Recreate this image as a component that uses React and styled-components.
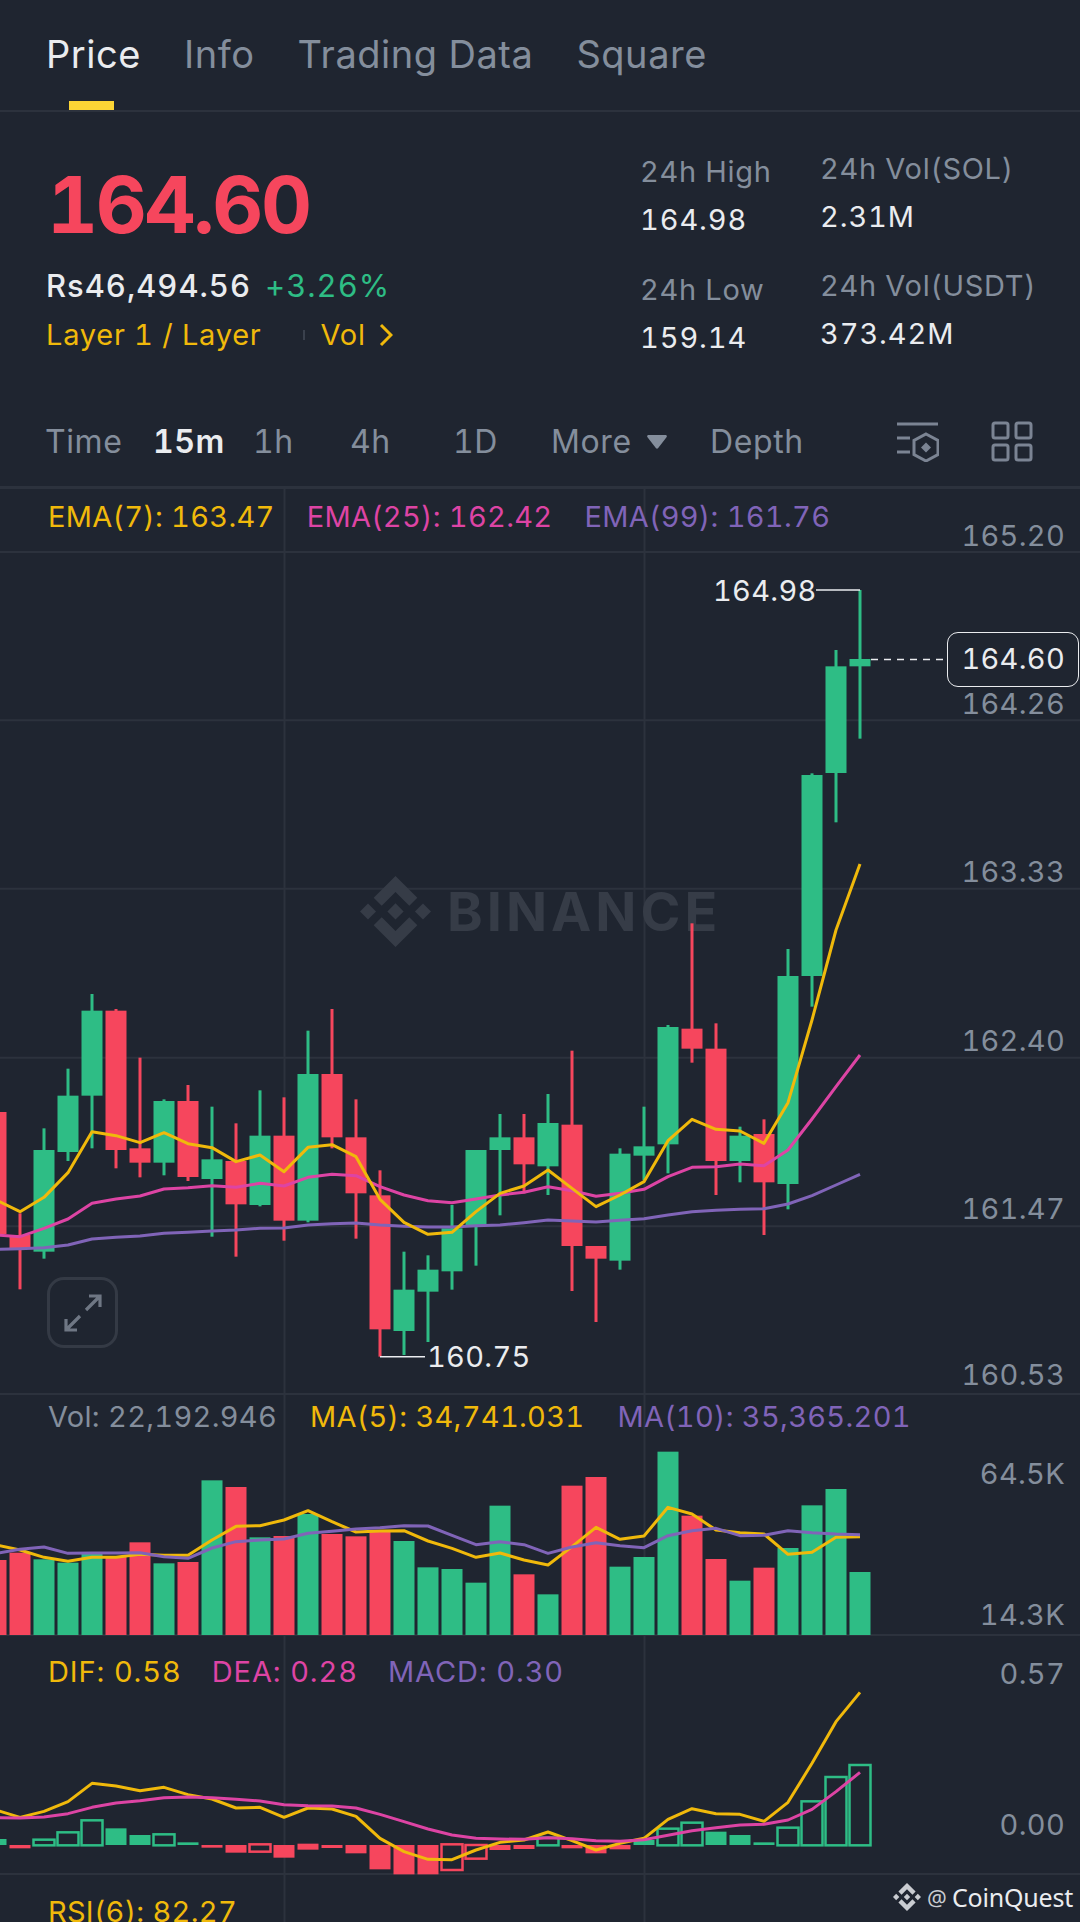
import React from "react";
import styled, { createGlobalStyle } from "styled-components";

const colors = {
  bg: "#1f2530",
  line: "#2c323d",
  muted: "#848e9c",
  white: "#eaecef",
  up: "#2ebd85",
  down: "#f6465d",
  yellow: "#f0b90b",
  pink: "#dd44a4",
  purple: "#8064b8",
};

// candles: up?, wick top, body top, body bottom, wick bottom (3x chart units, see candleY)
const candles = [
  [0, 396, 396, 762, 762], [0, 700, 765, 805, 928], [1, 445, 510, 815, 836], [1, 266, 347, 516, 543],
  [1, 42, 92, 347, 505], [0, 87, 92, 510, 565], [0, 233, 505, 548, 592], [1, 358, 363, 548, 586],
  [0, 315, 363, 591, 603], [1, 380, 538, 597, 770], [0, 430, 543, 673, 830], [1, 331, 467, 675, 679],
  [0, 352, 467, 722, 782], [1, 152, 282, 722, 727], [0, 87, 282, 472, 505], [0, 358, 472, 640, 776],
  [0, 571, 646, 1048, 1130], [1, 815, 929, 1053, 1125], [1, 826, 869, 935, 1086], [1, 675, 745, 874, 929],
  [1, 510, 510, 735, 857], [1, 402, 472, 510, 706], [0, 402, 472, 553, 640], [1, 342, 429, 559, 645],
  [0, 212, 434, 798, 933], [0, 798, 798, 836, 1026], [1, 505, 521, 842, 869], [1, 380, 499, 527, 600],
  [1, 135, 141, 493, 580], [0, -170, 146, 206, 248], [0, 130, 206, 543, 645], [1, 440, 467, 543, 607],
  [0, 418, 462, 607, 765], [1, -93, -12, 612, 688], [1, -620, -615, -12, 80], [1, -990, -941, -621, -473],
  [1, -1170, -963, -941, -724],
];
const ema7 = [660, 695, 652, 578, 455, 467, 488, 458, 491, 503, 545, 525, 575, 502, 494, 530, 658, 727, 763, 757, 695, 640, 618, 570, 625, 680, 645, 605, 482, 418, 448, 453, 490, 368, 120, -150, -348];
const ema25 = [765, 770, 745, 717, 670, 657, 648, 627, 623, 617, 622, 610, 618, 592, 583, 587, 620, 645, 662, 668, 657, 645, 637, 620, 632, 649, 640, 628, 590, 562, 560, 552, 557, 510, 417, 320, 225];
const ema99 = [808, 806, 803, 795, 777, 772, 768, 760, 757, 753, 750, 745, 744, 735, 731, 729, 735, 739, 741, 741, 737, 735, 728, 720, 723, 726, 721, 716, 705, 695, 691, 688, 686, 672, 647, 615, 583];

const volumes = [480, 458, 478, 488, 462, 470, 427, 490, 486, 241, 261, 412, 408, 342, 402, 409, 390, 423, 502, 507, 548, 317, 523, 583, 257, 231, 500, 471, 155, 347, 477, 542, 503, 444, 316, 267, 516];
const ma5 = [435, 450, 472, 484, 472, 472, 463, 466, 466, 420, 379, 377, 360, 332, 365, 396, 393, 392, 423, 445, 472, 459, 480, 495, 440, 382, 418, 408, 322, 342, 390, 398, 402, 463, 457, 412, 410];
const ma10 = [460, 448, 441, 460, 459, 459, 458, 470, 475, 444, 425, 420, 417, 400, 394, 387, 383, 377, 378, 406, 434, 425, 434, 460, 441, 428, 437, 443, 407, 392, 385, 407, 406, 392, 398, 402, 404];

// macd bars: up?, top, bottom, hollow?
const macdBars = [
  [1, 1317, 1335], [0, 1335, 1345], [1, 1319, 1336, 1], [1, 1297, 1336, 1], [1, 1261, 1336, 1], [1, 1285, 1335],
  [1, 1305, 1335], [1, 1303, 1336, 1], [1, 1327, 1335], [0, 1335, 1343], [0, 1335, 1358], [0, 1333, 1355, 1],
  [0, 1335, 1373], [0, 1331, 1349], [0, 1335, 1344], [0, 1335, 1360], [0, 1335, 1408], [0, 1335, 1423],
  [0, 1335, 1423], [0, 1333, 1410, 1], [0, 1335, 1376, 1], [0, 1335, 1350], [0, 1335, 1347], [1, 1313, 1336, 1],
  [0, 1335, 1345], [0, 1335, 1360], [0, 1335, 1348], [1, 1320, 1335], [1, 1286, 1336, 1], [1, 1268, 1336, 1],
  [1, 1295, 1335], [1, 1305, 1335], [1, 1327, 1335], [1, 1283, 1336, 1], [1, 1204, 1336, 1], [1, 1131, 1336, 1],
  [1, 1095, 1336, 1],
];
const dif = [1230, 1252, 1234, 1205, 1150, 1158, 1172, 1162, 1184, 1197, 1224, 1222, 1252, 1224, 1227, 1249, 1315, 1355, 1378, 1379, 1350, 1327, 1320, 1296, 1322, 1350, 1330, 1315, 1258, 1226, 1241, 1243, 1264, 1207, 1090, 965, 877];
const dea = [1253, 1254, 1251, 1241, 1222, 1209, 1202, 1193, 1191, 1193, 1198, 1203, 1214, 1217, 1218, 1224, 1243, 1265, 1287, 1305, 1315, 1317, 1318, 1313, 1316, 1322, 1324, 1319, 1306, 1292, 1283, 1275, 1273, 1260, 1228, 1175, 1117];

const candleX = (i) => -4 + 24 * i;
const candleY = (v) => 980 + v / 3;
const lowerY = (v) => 1400 + v / 3;
const points = (values, toY) => values.map((v, i) => `${candleX(i)},${toY(v)}`).join(" ");

const GlobalStyle = createGlobalStyle`
  html, body {
    margin: 0;
    background: ${colors.bg};
  }
  body {
    font-family: "Inter", "Liberation Sans", sans-serif;
    font-variant-numeric: tabular-nums;
    color: ${colors.white};
  }
`;

const Page = styled.div`
  width: 1080px;
  height: 1922px;
  overflow: hidden;
  background: ${colors.bg};
`;

const Tabs = styled.nav`
  display: flex;
  gap: 43px;
  height: 110px;
  padding-left: 46px;
  border-bottom: 2px solid ${colors.line};
`;

const Tab = styled.div`
  position: relative;
  padding-top: 30px;
  font-size: 38px;
  line-height: 48px;
  letter-spacing: 0.55px;
  color: ${({ $active }) => ($active ? colors.white : colors.muted)};

  ${({ $active }) =>
    $active &&
    `&::after {
      content: "";
      position: absolute;
      left: 23px;
      bottom: 0;
      width: 45px;
      height: 9px;
      background: #fcd535;
    }`}
`;

const Summary = styled.section`
  display: flex;
  height: 283px;
  padding-left: 46px;
`;

const PriceBlock = styled.div`
  width: 594px;
  padding-top: 52px;
`;

const LastPrice = styled.div`
  margin-left: 1px;
  font-size: 79px;
  line-height: 80px;
  font-weight: 700;
  letter-spacing: -2.3px;
  color: ${colors.down};
`;

const FiatRow = styled.div`
  display: flex;
  gap: 14px;
  margin-top: 22px;
  font-size: 31px;
  line-height: 40px;
  font-weight: 500;
  letter-spacing: 1px;
`;

const Change = styled.span`
  font-weight: 400;
  color: ${colors.up};
`;

const TagRow = styled.div`
  display: flex;
  align-items: center;
  margin-top: 9px;
  font-size: 29px;
  line-height: 40px;
  letter-spacing: 0.75px;
  color: ${colors.yellow};
`;

const TagTick = styled.i`
  width: 2px;
  height: 10px;
  margin: 0 16px 0 41px;
  background: #3a414d;
`;

const Chevron = styled.svg`
  width: 14px;
  height: 24px;
  margin-left: 13px;
`;

const StatColumn = styled.div`
  display: flex;
  flex-direction: column;
  gap: ${({ $gap }) => $gap}px;
  width: ${({ $width }) => $width}px;
  padding-top: ${({ $top }) => $top}px;
`;

const StatLabel = styled.div`
  font-size: 29px;
  line-height: 40px;
  letter-spacing: 0.7px;
  color: ${colors.muted};
  white-space: nowrap;
`;

const StatValue = styled.div`
  margin-top: 8px;
  font-size: 29px;
  line-height: 40px;
  letter-spacing: 0.9px;
  color: ${colors.white};
`;

const Toolbar = styled.div`
  display: grid;
  grid-template-columns: 108px 100px 97px 103px 98px 159px 187px 94px auto;
  align-items: center;
  box-sizing: border-box;
  height: 94px;
  padding: 2px 0 0 45px;
  border-bottom: 3px solid ${colors.line};
`;

const Interval = styled.div`
  display: flex;
  align-items: center;
  gap: 15px;
  font-size: 32px;
  line-height: 40px;
  letter-spacing: 0.6px;
  font-weight: ${({ $active }) => ($active ? 600 : 400)};
  color: ${({ $active }) => ($active ? colors.white : colors.muted)};
`;

const ToolIcon = styled.svg`
  display: block;
`;

const Pane = styled.div`
  position: relative;
  height: ${({ $height }) => $height}px;
  overflow: hidden;
`;

const Plot = styled.svg`
  position: absolute;
  left: 0;
  top: 0;
  width: 1080px;
  height: 100%;
`;

const Legend = styled.div`
  position: relative;
  display: flex;
  gap: ${({ $gap = 32 }) => $gap}px;
  padding: ${({ $top }) => $top}px 0 0 48px;
  font-size: 29px;
  line-height: 40px;
  letter-spacing: ${({ $spacing = 0.3 }) => $spacing}px;
`;

const LegendItem = styled.span`
  color: ${({ $color }) => $color};
`;

const AxisLabel = styled.div`
  position: absolute;
  right: 15px;
  top: ${({ $center }) => $center - 20}px;
  font-size: 29px;
  line-height: 40px;
  letter-spacing: 0.3px;
  color: ${colors.muted};
`;

const Watermark = styled.div`
  position: absolute;
  left: 360px;
  top: 387px;
  display: flex;
  align-items: center;
  gap: 16px;
  font-size: 54px;
  font-weight: 700;
  letter-spacing: 4px;
  line-height: 71px;
  color: #363c47;
`;

const ExtremeLabel = styled.div`
  position: absolute;
  left: ${({ $left }) => $left}px;
  top: ${({ $center }) => $center - 20}px;
  font-size: 29px;
  line-height: 40px;
  letter-spacing: 0.3px;
  color: ${colors.white};
`;

const PriceTag = styled.div`
  position: absolute;
  left: 947px;
  top: 143px;
  box-sizing: border-box;
  width: 132px;
  height: 55px;
  padding-right: 13px;
  border: 1.5px solid ${colors.white};
  border-radius: 11px;
  background: ${colors.bg};
  font-size: 29px;
  line-height: 52px;
  letter-spacing: 0.3px;
  text-align: right;
  color: ${colors.white};
`;

const ExpandButton = styled.button`
  position: absolute;
  left: 47px;
  top: 788px;
  display: flex;
  align-items: center;
  justify-content: center;
  width: 71px;
  height: 71px;
  padding: 0;
  border: 3px solid #343a45;
  border-radius: 17px;
  background: transparent;
`;

const Credit = styled.div`
  position: absolute;
  right: 7px;
  top: 4px;
  display: flex;
  align-items: center;
  font-family: "Noto Sans", sans-serif;
  font-size: 25px;
  line-height: 36px;
  letter-spacing: -0.2px;
  color: #eaecef;
`;

const CreditAt = styled.span`
  margin: 0 5px 0 6px;
  font-size: 22px;
  letter-spacing: 0;
  color: #c9ccd1;
`;

const BinanceMark = ({ size, color }) => (
  <svg width={size} height={size} viewBox="0 0 126.61 126.61" fill={color}>
    <path d="M38.73 53.2l24.59-24.58 24.6 24.6 14.3-14.31L63.32 0 24.43 38.9z" />
    <path d="M0 63.31l14.3-14.3 14.31 14.3-14.31 14.3z" />
    <path d="M38.73 73.41L63.32 98l24.6-24.6 14.31 14.29L63.32 126.61 24.43 87.72z" />
    <path d="M98 63.31l14.3-14.3 14.31 14.3-14.31 14.3z" />
    <path d="M77.83 63.3L63.32 48.78 48.82 63.29l14.5 14.5z" />
  </svg>
);

const GridLines = ({ rows = [] }) => (
  <g stroke={colors.line} strokeWidth="2">
    <line x1="284.5" x2="284.5" y1="0" y2="1922" />
    <line x1="644.5" x2="644.5" y1="0" y2="1922" />
    {rows.map((y) => (
      <line key={y} x1="0" x2="1080" y1={y} y2={y} />
    ))}
  </g>
);

const SeriesLine = ({ values, toY, color }) => (
  <polyline points={points(values, toY)} fill="none" stroke={color} strokeWidth="3" strokeLinejoin="round" />
);

const CandlePane = () => (
  <Pane $height={906}>
    <Plot viewBox="0 489 1080 906">
      <GridLines rows={[552, 720.3, 888.7, 1057.7, 1226.3, 1394]} />
    </Plot>
    <Watermark>
      <BinanceMark size={71} color="#363c47" />
      BINANCE
    </Watermark>
    <Plot viewBox="0 489 1080 906">
      {candles.map(([up, wickTop, bodyTop, bodyBottom, wickBottom], i) => {
        const x = candleX(i);
        const fill = up ? colors.up : colors.down;
        return (
          <g key={x} fill={fill}>
            <rect x={x - 1.5} width="3" y={candleY(wickTop)} height={(wickBottom - wickTop) / 3} />
            <rect x={x - 10.5} width="21" y={candleY(bodyTop)} height={Math.max((bodyBottom - bodyTop) / 3, 2)} />
          </g>
        );
      })}
      <SeriesLine values={ema99} toY={candleY} color={colors.purple} />
      <SeriesLine values={ema25} toY={candleY} color={colors.pink} />
      <SeriesLine values={ema7} toY={candleY} color={colors.yellow} />
      <g stroke={colors.white} strokeWidth="1.5">
        <line x1="816" x2="860" y1="590" y2="590" />
        <line x1="380" x2="425" y1="1356.7" y2="1356.7" />
        <line x1="871" x2="947" y1="659.5" y2="659.5" strokeDasharray="7 6" />
      </g>
    </Plot>
    <Legend $top={8}>
      <LegendItem $color={colors.yellow}>EMA(7): 163.47</LegendItem>
      <LegendItem $color={colors.pink}>EMA(25): 162.42</LegendItem>
      <LegendItem $color={colors.purple}>EMA(99): 161.76</LegendItem>
    </Legend>
    <AxisLabel $center={47}>165.20</AxisLabel>
    <AxisLabel $center={215}>164.26</AxisLabel>
    <AxisLabel $center={383}>163.33</AxisLabel>
    <AxisLabel $center={552}>162.40</AxisLabel>
    <AxisLabel $center={720}>161.47</AxisLabel>
    <AxisLabel $center={886}>160.53</AxisLabel>
    <ExtremeLabel $left={713} $center={102}>164.98</ExtremeLabel>
    <ExtremeLabel $left={427} $center={868}>160.75</ExtremeLabel>
    <PriceTag>164.60</PriceTag>
    <ExpandButton aria-label="Fullscreen">
      <svg width="50" height="50" viewBox="0 0 50 50" fill="none" stroke="#6f7784" strokeWidth="3.2">
        <path d="M28 22L42 8M31 8h11v11" />
        <path d="M22 28L8 42M19 42H8V31" />
      </svg>
    </ExpandButton>
  </Pane>
);

const VolumePane = () => (
  <Pane $height={241}>
    <Plot viewBox="0 1395 1080 241">
      <GridLines rows={[1635]} />
      {volumes.map((top, i) => (
        <rect
          key={i}
          x={candleX(i) - 10.5}
          width="21"
          y={lowerY(top)}
          height={(705 - top) / 3}
          fill={candles[i][0] ? colors.up : colors.down}
        />
      ))}
      <SeriesLine values={ma5} toY={lowerY} color={colors.yellow} />
      <SeriesLine values={ma10} toY={lowerY} color={colors.purple} />
    </Plot>
    <Legend $top={2} $gap={33}>
      <LegendItem $color={colors.muted}>Vol: 22,192.946</LegendItem>
      <LegendItem $color={colors.yellow}>MA(5): 34,741.031</LegendItem>
      <LegendItem $color={colors.purple}>MA(10): 35,365.201</LegendItem>
    </Legend>
    <AxisLabel $center={79}>64.5K</AxisLabel>
    <AxisLabel $center={220}>14.3K</AxisLabel>
  </Pane>
);

const MacdPane = () => (
  <Pane $height={239}>
    <Plot viewBox="0 1636 1080 239">
      <GridLines rows={[1874]} />
      {macdBars.map(([up, top, bottom, hollow], i) => {
        const color = up ? colors.up : colors.down;
        return (
          <rect
            key={i}
            x={candleX(i) - 10.5}
            width="21"
            y={lowerY(top)}
            height={Math.max((bottom - top) / 3, 2)}
            fill={hollow ? "none" : color}
            stroke={hollow ? color : "none"}
            strokeWidth="2.5"
          />
        );
      })}
      <SeriesLine values={dif} toY={lowerY} color={colors.yellow} />
      <SeriesLine values={dea} toY={lowerY} color={colors.pink} />
    </Plot>
    <Legend $top={16} $gap={30} $spacing={0.9}>
      <LegendItem $color={colors.yellow}>DIF: 0.58</LegendItem>
      <LegendItem $color={colors.pink}>DEA: 0.28</LegendItem>
      <LegendItem $color={colors.purple}>MACD: 0.30</LegendItem>
    </Legend>
    <AxisLabel $center={38}>0.57</AxisLabel>
    <AxisLabel $center={189}>0.00</AxisLabel>
  </Pane>
);

const RsiPane = () => (
  <Pane $height={47}>
    <Plot viewBox="0 1875 1080 47">
      <GridLines />
    </Plot>
    <Legend $top={17}>
      <LegendItem $color={colors.yellow}>RSI(6): 82.27</LegendItem>
    </Legend>
    <Credit>
      <BinanceMark size={28} color="#c9ccd1" />
      <CreditAt>@</CreditAt>
      <span>CoinQuest</span>
    </Credit>
  </Pane>
);

const App = () => (
  <Page>
    <GlobalStyle />
    <Tabs>
      <Tab $active>Price</Tab>
      <Tab>Info</Tab>
      <Tab>Trading Data</Tab>
      <Tab>Square</Tab>
    </Tabs>

    <Summary>
      <PriceBlock>
        <LastPrice>164.60</LastPrice>
        <FiatRow>
          <span>Rs46,494.56</span>
          <Change>+3.26%</Change>
        </FiatRow>
        <TagRow>
          Layer 1 / Layer
          <TagTick />
          Vol
          <Chevron viewBox="0 0 14 24" fill="none" stroke={colors.yellow} strokeWidth="3">
            <path d="M2 2l10 10L2 22" />
          </Chevron>
        </TagRow>
      </PriceBlock>
      <StatColumn $top={40} $gap={30} $width={180}>
        <div>
          <StatLabel>24h High</StatLabel>
          <StatValue>164.98</StatValue>
        </div>
        <div>
          <StatLabel>24h Low</StatLabel>
          <StatValue>159.14</StatValue>
        </div>
      </StatColumn>
      <StatColumn $top={37} $gap={29} $width={212}>
        <div>
          <StatLabel>24h Vol(SOL)</StatLabel>
          <StatValue>2.31M</StatValue>
        </div>
        <div>
          <StatLabel>24h Vol(USDT)</StatLabel>
          <StatValue>373.42M</StatValue>
        </div>
      </StatColumn>
    </Summary>

    <Toolbar>
      <Interval>Time</Interval>
      <Interval $active>15m</Interval>
      <Interval>1h</Interval>
      <Interval>4h</Interval>
      <Interval>1D</Interval>
      <Interval>
        More
        <svg width="20" height="14" viewBox="0 0 20 14" fill={colors.muted}>
          <path d="M1.5 0h17c1.2 0 1.8 1.3 1 2.2l-8.5 11c-.5.6-1.5.6-2 0L.5 2.2C-.3 1.3.3 0 1.5 0z" />
        </svg>
      </Interval>
      <Interval>Depth</Interval>
      <ToolIcon width="42" height="40" viewBox="0 0 42 40" fill="none" stroke="#7b8493" strokeWidth="3">
        <path d="M0 2h41M0 16h13M0 30h13" />
        <path d="M29 12l12 6.5v14L29 39l-12-6.5v-14z" />
        <path d="M29 20.5l5 5-5 5-5-5z" fill="#7b8493" stroke="none" />
      </ToolIcon>
      <ToolIcon width="42" height="42" viewBox="0 0 42 42" fill="none" stroke="#7b8493" strokeWidth="3">
        <rect x="2" y="2" width="15" height="15" rx="2" />
        <rect x="25" y="2" width="15" height="15" rx="2" />
        <rect x="2" y="24" width="15" height="15" rx="2" />
        <rect x="25" y="24" width="15" height="15" rx="2" />
      </ToolIcon>
    </Toolbar>

    <CandlePane />
    <VolumePane />
    <MacdPane />
    <RsiPane />
  </Page>
);

export default App;
